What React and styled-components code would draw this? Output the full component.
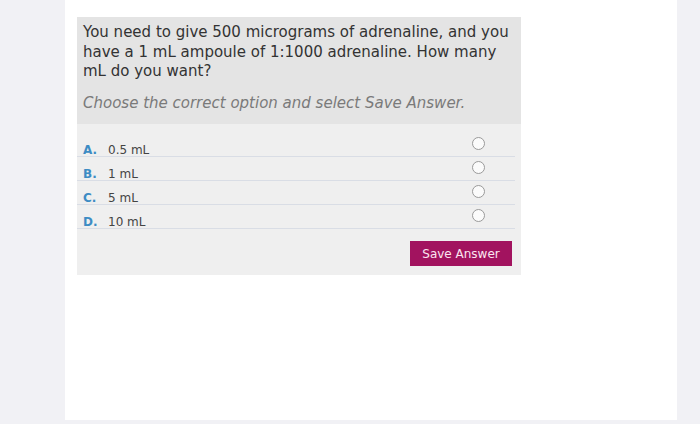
import React from "react";
import styled, { createGlobalStyle } from "styled-components";

const Global = createGlobalStyle`
  html, body { margin: 0; padding: 0; background: #ffffff; }
  body { font-family: "DejaVu Sans", Verdana, sans-serif; }
  #root { height: 424px; }
`;

const Page = styled.div`
  display: flex;
  width: 700px;
  height: 424px;
  background: #f1f1f5;
`;

const SideStrip = styled.div`
  width: ${(p) => p.$w}px;
  flex: none;
  background: #f1f1f5;
`;

const Main = styled.div`
  flex: 1;
  background: #ffffff;
  padding: 17px 0 0 12px;
  height: 420px;
  box-sizing: border-box;
`;

const Card = styled.div`
  width: 444px;
  background: #efefef;
`;

const Header = styled.div`
  background: #e4e4e4;
  padding: 6px 6px 11px 6px;
`;

const Question = styled.p`
  margin: 0;
  font-size: 15px;
  line-height: 19.5px;
  color: #333333;
`;

const Hint = styled.p`
  margin: 12px 0 0;
  font-size: 15px;
  line-height: 19.5px;
  font-style: italic;
  color: #7a7a7a;
`;

const Options = styled.div`
  padding: 9px 0 9px 0;
  display: flex;
  flex-direction: column;
`;

const Row = styled.label`
  display: flex;
  align-items: flex-start;
  height: 24px;
  box-sizing: border-box;
  margin-right: 6px;
  padding-left: 6px;
  border-bottom: 1px solid #d9dde5;
`;

const Letter = styled.span`
  width: 25px;
  padding-top: 10px;
  font-size: 12px;
  line-height: 14px;
  font-weight: bold;
  color: #3d8cc4;
`;

const OptText = styled.span`
  flex: 1;
  padding-top: 10px;
  font-size: 12px;
  line-height: 14px;
  color: #444444;
`;

const Radio = styled.span`
  width: 11px;
  height: 11px;
  margin: 4px 30px 0 0;
  border: 1.5px solid #9a9a9a;
  border-radius: 50%;
  background: #fbfbfb;
`;

const ButtonBar = styled.div`
  display: flex;
  justify-content: flex-end;
  padding: 12px 9px 0 0;
`;

const SaveButton = styled.button`
  width: 102px;
  height: 25px;
  border: none;
  background: #a2135f;
  color: #fbe6f0;
  font-family: "DejaVu Sans", Verdana, sans-serif;
  font-size: 12px;
  padding: 0;
  cursor: pointer;
`;

const options = [
  ["A.", "0.5 mL"],
  ["B.", "1 mL"],
  ["C.", "5 mL"],
  ["D.", "10 mL"],
];

export default function App() {
  return (
    <>
      <Global />
      <Page>
        <SideStrip $w={65} />
        <Main>
          <Card>
            <Header>
              <Question>
                You need to give 500 micrograms of adrenaline, and you have a 1 mL
                ampoule of 1:1000 adrenaline. How many mL do you want?
              </Question>
              <Hint>Choose the correct option and select Save Answer.</Hint>
            </Header>
            <Options>
              {options.map(([l, t]) => (
                <Row key={l}>
                  <Letter>{l}</Letter>
                  <OptText>{t}</OptText>
                  <Radio />
                </Row>
              ))}
              <ButtonBar>
                <SaveButton>Save Answer</SaveButton>
              </ButtonBar>
            </Options>
          </Card>
        </Main>
        <SideStrip $w={23} />
      </Page>
    </>
  );
}
